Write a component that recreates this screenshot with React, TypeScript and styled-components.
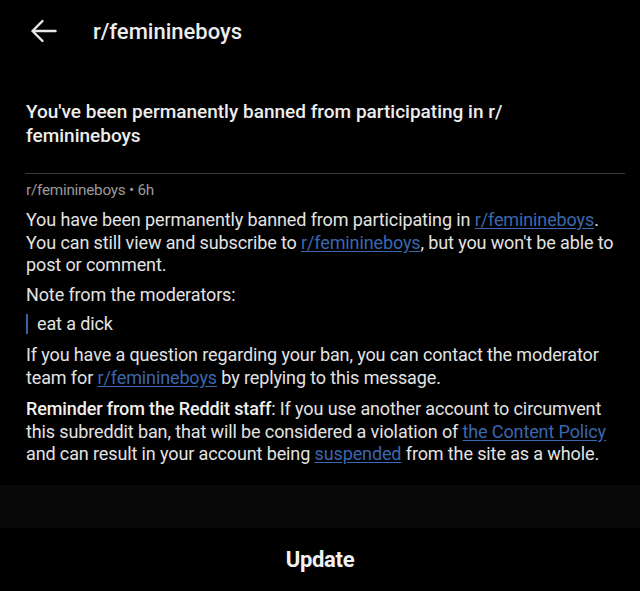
import styled, { createGlobalStyle } from 'styled-components';

const GlobalStyle = createGlobalStyle`
  html, body {
    margin: 0;
    padding: 0;
    background: #000;
  }
  body {
    font-family: Roboto, "Noto Sans", "Liberation Sans", sans-serif;
    color: #e6e6e6;
  }
`;

const Screen = styled.div`
  width: 640px;
  height: 591px;
  background: #000;
  display: flex;
  flex-direction: column;
  overflow: hidden;
`;

const Header = styled.div`
  display: flex;
  align-items: center;
  height: 64px;
  padding-left: 30px;
  gap: 36px;
`;

const BackButton = styled.div`
  width: 27px;
  height: 26px;
  display: flex;
  align-items: center;
  justify-content: center;
  margin-top: -2px;
`;

const HeaderTitle = styled.div`
  font-size: 22px;
  font-weight: 500;
  color: #ececec;
  margin-top: -2px;
`;

const Content = styled.div`
  padding: 36px 20px 0 26px;
  flex: 1;
`;

const Title = styled.h1`
  margin: 0;
  font-size: 19px;
  line-height: 23.5px;
  font-weight: 500;
  color: #ededed;
  width: 520px;
`;

const Divider = styled.div`
  height: 1px;
  background: #3a3a3a;
  margin: 26px -5px 0 -1px;
`;

const Meta = styled.div`
  margin-top: 7px;
  font-size: 15.3px;
  line-height: 18px;
  color: #9a9a9a;
  letter-spacing: -0.25px;
`;

const Paragraph = styled.p<{ $gap?: number }>`
  margin: ${(p) => p.$gap ?? 7}px 0 0;
  font-size: 18px;
  line-height: 22.5px;
  color: #e3e3e3;
  letter-spacing: -0.12px;
`;

const Strong = styled.strong`
  font-weight: 500;
  color: #f0f0f0;
`;

const Link = styled.a`
  color: #3a67ae;
  text-decoration: underline;
  text-underline-offset: 2px;
`;

const Quote = styled.div`
  margin-top: 8px;
  border-left: 2px solid #3a64a8;
  padding-left: 9px;
  font-size: 18px;
  line-height: 20px;
  letter-spacing: -0.12px;
  color: #e3e3e3;
`;

const BottomBand = styled.div`
  height: 43px;
  background: #080808;
`;

const Footer = styled.div`
  height: 63px;
  display: flex;
  align-items: center;
  justify-content: center;
`;

const UpdateButton = styled.div`
  font-size: 22px;
  font-weight: 700;
  color: #f2f2f2;
  letter-spacing: -0.3px;
`;

export default function App() {
  return (
    <>
      <GlobalStyle />
      <Screen>
        <Header>
          <BackButton>
            <svg width="27" height="26" viewBox="0 0 27 26" fill="none">
              <path
                d="M25.5 13H2.5M12.5 3L2.5 13L12.5 23"
                stroke="#e8e8e8"
                strokeWidth="2.4"
                strokeLinecap="round"
                strokeLinejoin="round"
              />
            </svg>
          </BackButton>
          <HeaderTitle>r/feminineboys</HeaderTitle>
        </Header>
        <Content>
          <Title>You've been permanently banned from participating in r/ feminineboys</Title>
          <Divider />
          <Meta>r/feminineboys • 6h</Meta>
          <Paragraph $gap={10}>
            You have been permanently banned from participating in <Link>r/feminineboys</Link>.
            You can still view and subscribe to <Link>r/feminineboys</Link>, but you won't be able to
            post or comment.
          </Paragraph>
          <Paragraph>Note from the moderators:</Paragraph>
          <Quote>eat a dick</Quote>
          <Paragraph $gap={10}>
            If you have a question regarding your ban, you can contact the moderator team for{' '}
            <Link>r/feminineboys</Link> by replying to this message.
          </Paragraph>
          <Paragraph $gap={9}>
            <Strong>Reminder from the Reddit staff</Strong>: If you use another account to circumvent
            this subreddit ban, that will be considered a violation of <Link>the Content Policy</Link>{' '}
            and can result in your account being <Link>suspended</Link> from the site as a whole.
          </Paragraph>
        </Content>
        <BottomBand />
        <Footer>
          <UpdateButton>Update</UpdateButton>
        </Footer>
      </Screen>
    </>
  );
}
